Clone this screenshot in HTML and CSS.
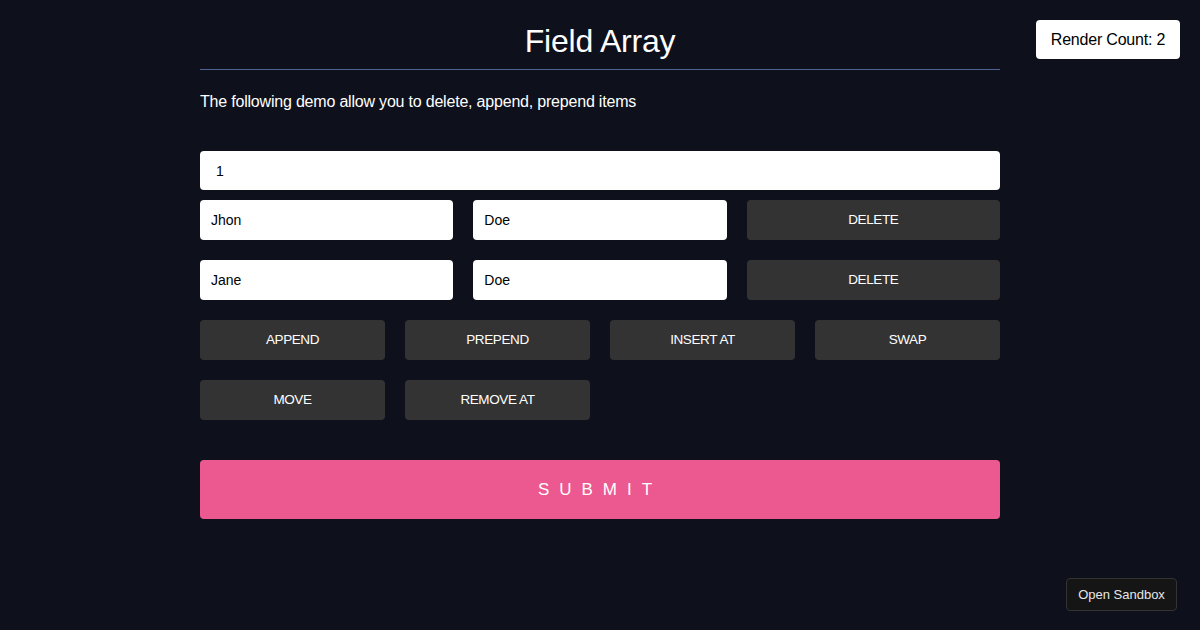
FILE: index.html
```html
<!DOCTYPE html>
<html>
<head>
    <title>Field Array</title>
    <link rel="stylesheet" href="styles.css">
</head>
<body>
    <div class="counter">Render Count: 2</div>

    <form class="form">
        <h1>Field Array</h1>
        <p class="intro">The following demo allow you to delete, append, prepend items</p>

        <input class="field field-wide" value="1">

        <div class="row">
            <input class="field" value="Jhon">
            <input class="field" value="Doe">
            <button type="button" class="btn">Delete</button>
        </div>
        <div class="row">
            <input class="field" value="Jane">
            <input class="field" value="Doe">
            <button type="button" class="btn">Delete</button>
        </div>

        <div class="actions">
            <button type="button" class="btn">Append</button>
            <button type="button" class="btn">Prepend</button>
            <button type="button" class="btn">Insert At</button>
            <button type="button" class="btn">Swap</button>
            <button type="button" class="btn">Move</button>
            <button type="button" class="btn">Remove At</button>
        </div>

        <button type="submit" class="submit">Submit</button>
    </form>

    <button class="sandbox">Open Sandbox</button>
</body>
</html>
```

FILE: styles.css
```css
body {
    margin: 0;
    background: #0e101c;
    font-family: 'Liberation Sans', Arial, sans-serif;
    color: white;
}

.form {
    width: 800px;
    margin: 0 auto;
    padding-top: 23px;
    display: flex;
    flex-direction: column;
}

h1 {
    margin: 0;
    font-size: 32px;
    font-weight: 100;
    line-height: 36px;
    text-align: center;
    padding-bottom: 10px;
    border-bottom: 1px solid rgb(79, 98, 148);
    letter-spacing: -0.2px;
}

.intro {
    margin: 23px 0 40px;
    font-size: 16px;
    line-height: 18px;
    letter-spacing: -0.2px;
}

.field {
    box-sizing: border-box;
    height: 40px;
    width: 100%;
    border: none;
    border-radius: 4px;
    background: white;
    padding: 0 11px;
    font-family: inherit;
    font-size: 14px;
    color: black;
}

.field-wide {
    height: 39px;
    padding: 0 16px;
    margin-bottom: 10px;
}

.row {
    display: grid;
    grid-template-columns: repeat(3, 1fr);
    gap: 20px;
    margin-bottom: 20px;
}

.actions {
    display: grid;
    grid-template-columns: repeat(4, 1fr);
    gap: 20px;
}

.btn {
    height: 40px;
    padding: 0 0 1px;
    border: none;
    border-radius: 4px;
    background: #333333;
    color: white;
    font-family: inherit;
    font-size: 13.5px;
    letter-spacing: -0.4px;
    text-transform: uppercase;
}

.submit {
    margin-top: 40px;
    height: 59px;
    border: none;
    border-radius: 4px;
    background: #ec5990;
    color: white;
    font-family: inherit;
    font-size: 17px;
    font-weight: 100;
    letter-spacing: 10px;
    text-transform: uppercase;
}

.counter {
    position: absolute;
    top: 20px;
    right: 20px;
    width: 144px;
    height: 39px;
    line-height: 39px;
    text-align: center;
    background: white;
    color: black;
    border-radius: 4px;
    font-size: 16px;
    letter-spacing: -0.2px;
}

.sandbox {
    position: fixed;
    right: 23px;
    bottom: 19px;
    width: 111px;
    height: 33px;
    background: #151515;
    border: 1px solid #333;
    border-radius: 4px;
    color: #e6e6e6;
    font-family: inherit;
    font-size: 13px;
}
```
